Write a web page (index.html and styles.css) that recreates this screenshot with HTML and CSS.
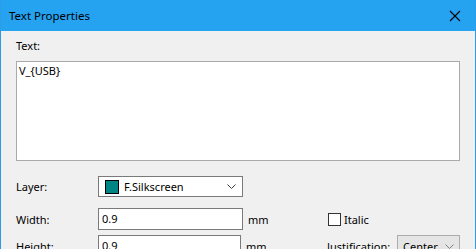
FILE: index.html
```html
<!DOCTYPE html>
<html lang="en">
<head>
    <meta charset="UTF-8">
    <title>Text Properties</title>
    <link rel="stylesheet" href="styles.css">
</head>
<body>

<div class="window">
    <div class="titlebar">
        <span class="title">Text Properties</span>
        <svg class="close" width="12" height="12" viewBox="0 0 12 12">
            <path d="M1 1 L11 11 M11 1 L1 11" stroke="#000" stroke-width="1.1" fill="none"/>
        </svg>
    </div>

    <div class="content">
        <div class="text-label">Text:</div>
        <div class="textbox">V_{USB}</div>

        <div class="row row-layer">
            <span class="label">Layer:</span>
            <div class="combo">
                <span class="swatch"></span>
                <span class="combo-text">F.Silkscreen</span>
                <svg class="chevron" width="9" height="5" viewBox="0 0 9 5">
                    <path d="M0.5 0.5 L4.5 4.5 L8.5 0.5" stroke="#404040" stroke-width="1" fill="none"/>
                </svg>
            </div>
        </div>

        <div class="row row-width">
            <span class="label">Width:</span>
            <div class="field">0.9</div>
            <span class="unit">mm</span>
            <label class="check"><span class="box"></span>Italic</label>
        </div>

        <div class="row row-height">
            <span class="label">Height:</span>
            <div class="field">0.9</div>
            <span class="unit">mm</span>
            <span class="just-label">Justification:</span>
            <div class="combo combo-disabled">
                <span class="combo-text">Center</span>
                <svg class="chevron" width="9" height="5" viewBox="0 0 9 5">
                    <path d="M0.5 0.5 L4.5 4.5 L8.5 0.5" stroke="#808080" stroke-width="1" fill="none"/>
                </svg>
            </div>
        </div>
    </div>
</div>

</body>
</html>
```

FILE: styles.css
```css
body {
    margin: 0;
    padding: 0;
    font-family: 'Noto Sans', sans-serif;
    font-size: 11px;
    color: #000;
    background-color: #f0f0f0;
}

.window {
    width: 476px;
    height: 249px;
    box-sizing: border-box;
    border-left: 1px solid #2b9ce6;
    border-right: 1px solid #2b9ce6;
    background-color: #f0f0f0;
    overflow: hidden;
}

.titlebar {
    height: 31px;
    background-color: #25a2f0;
    display: flex;
    align-items: center;
    padding-left: 8px;
    padding-right: 14px;
}

.title {
    flex: 1;
    font-size: 11.5px;
    margin-top: -1px;
}

.close {
    display: block;
}

.content {
    padding: 7px 15px 0;
}

.text-label {
    height: 16px;
    line-height: 16px;
}

.textbox {
    margin-top: 7px;
    width: 444px;
    height: 100px;
    box-sizing: border-box;
    border: 1px solid #ababab;
    background-color: #fff;
    padding: 2px 2px;
    line-height: 14px;
}

.row {
    display: flex;
    align-items: center;
}

.row-layer {
    margin-top: 15px;
}

.row-width {
    margin-top: 11px;
}

.row-height {
    margin-top: 5px;
}

.label {
    width: 82px;
    flex-shrink: 0;
}

.combo {
    width: 145px;
    height: 21px;
    box-sizing: border-box;
    border: 1px solid #7a7a7a;
    background-color: #fff;
    display: flex;
    align-items: center;
    padding: 0 6px;
}

.swatch {
    width: 14px;
    height: 14px;
    box-sizing: border-box;
    border: 1px solid #000;
    background-color: #008484;
    margin-right: 5px;
}

.combo-text {
    flex: 1;
}

.field {
    width: 145px;
    height: 22px;
    box-sizing: border-box;
    border: 1px solid #7a7a7a;
    background-color: #fff;
    padding: 0 3px;
    line-height: 20px;
}

.unit {
    width: 85px;
    flex-shrink: 0;
    padding-left: 5px;
    box-sizing: border-box;
}

.check {
    display: flex;
    align-items: center;
}

.box {
    width: 13px;
    height: 13px;
    box-sizing: border-box;
    border: 1px solid #333;
    background-color: #fff;
    margin-right: 3px;
}

.just-label {
    width: 70px;
    flex-shrink: 0;
    margin-left: 1px;
}

.combo-disabled {
    width: 63px;
    height: 22px;
    flex-shrink: 0;
    background-color: #e5e5e5;
    border-color: #adadad;
    padding: 0 5px;
}
```
